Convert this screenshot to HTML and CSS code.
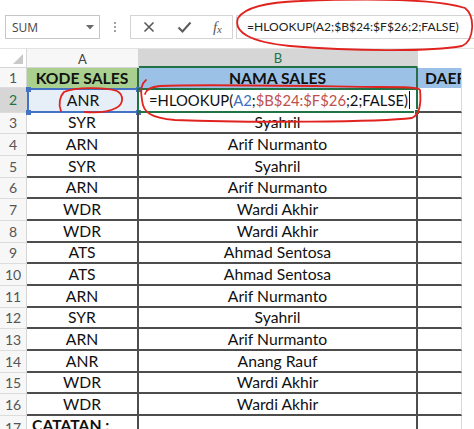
FILE: index.html
```html
<!DOCTYPE html>
<html>
<head>
<meta charset="utf-8">
<link rel="stylesheet" href="styles.css">
</head>
<body>
<div class="app">
  <div class="toolbar">
    <div class="namebox"><span class="nb-text">SUM</span><svg class="caret" width="8" height="5" viewBox="0 0 8 5"><path d="M0 0H8L4 4.5Z" fill="#6a6a6a"/></svg></div>
    <div class="grip"><i></i><i></i><i></i></div>
    <div class="fxbox">
      <svg class="ico" width="14" height="14" viewBox="0 0 14 14"><path d="M2.5 2.5L11.5 11.5M11.5 2.5L2.5 11.5" stroke="#5a5a5a" stroke-width="1.6" fill="none"/></svg>
      <svg class="ico" width="15" height="14" viewBox="0 0 15 14"><path d="M1.5 7.5L5.5 11.5L13.5 2.5" stroke="#5a5a5a" stroke-width="2" fill="none"/></svg>
      <span class="fx"><i>f</i><sub>x</sub></span>
    </div>
    <div class="formula">=HLOOKUP(A2;$B$24:$F$26;2;FALSE)</div>
  </div>

  <div class="sheet">
    <div class="corner"><svg width="10" height="10" viewBox="0 0 10 10"><path d="M10 0V10H0Z" fill="#c9c9c9"/></svg></div>
    <div class="ch">A</div>
    <div class="ch ch-sel">B</div>
    <div class="ch ch-c"></div>
    <div class="ch ch-rest"></div>

    <div class="rh">1</div>
    <div class="c ca hdr green">KODE SALES</div>
    <div class="c cb hdr blue b1">NAMA SALES</div>
    <div class="c cc hdr blue left">DAER</div>
    <div class="rest"></div>

    <div class="rh rh-sel">2</div>
    <div class="c ca a2">ANR<i class="h tl"></i><i class="h tr"></i><i class="h bl"></i><i class="h br"></i></div>
    <div class="c cb b2"><span>=HLOOKUP(<span class="ref1">A2</span>;<span class="ref2">$B$24:$F$26</span>;2;FALSE)</span><i class="caret-line"></i><i class="fill"></i></div>
    <div class="c cc"></div>
    <div class="rest"></div>

    <div class="rh">3</div><div class="c ca">SYR</div><div class="c cb">Syahril</div><div class="c cc"></div><div class="rest"></div>
    <div class="rh">4</div><div class="c ca">ARN</div><div class="c cb">Arif Nurmanto</div><div class="c cc"></div><div class="rest"></div>
    <div class="rh">5</div><div class="c ca">SYR</div><div class="c cb">Syahril</div><div class="c cc"></div><div class="rest"></div>
    <div class="rh">6</div><div class="c ca">ARN</div><div class="c cb">Arif Nurmanto</div><div class="c cc"></div><div class="rest"></div>
    <div class="rh">7</div><div class="c ca">WDR</div><div class="c cb">Wardi Akhir</div><div class="c cc"></div><div class="rest"></div>
    <div class="rh">8</div><div class="c ca">WDR</div><div class="c cb">Wardi Akhir</div><div class="c cc"></div><div class="rest"></div>
    <div class="rh">9</div><div class="c ca">ATS</div><div class="c cb">Ahmad Sentosa</div><div class="c cc"></div><div class="rest"></div>
    <div class="rh">10</div><div class="c ca">ATS</div><div class="c cb">Ahmad Sentosa</div><div class="c cc"></div><div class="rest"></div>
    <div class="rh">11</div><div class="c ca">ARN</div><div class="c cb">Arif Nurmanto</div><div class="c cc"></div><div class="rest"></div>
    <div class="rh">12</div><div class="c ca">SYR</div><div class="c cb">Syahril</div><div class="c cc"></div><div class="rest"></div>
    <div class="rh">13</div><div class="c ca">ARN</div><div class="c cb">Arif Nurmanto</div><div class="c cc"></div><div class="rest"></div>
    <div class="rh">14</div><div class="c ca">ANR</div><div class="c cb">Anang Rauf</div><div class="c cc"></div><div class="rest"></div>
    <div class="rh">15</div><div class="c ca">WDR</div><div class="c cb">Wardi Akhir</div><div class="c cc"></div><div class="rest"></div>
    <div class="rh">16</div><div class="c ca">WDR</div><div class="c cb">Wardi Akhir</div><div class="c cc"></div><div class="rest"></div>

    <div class="rh rh-last">17</div>
    <div class="c ca last note">CATATAN :</div>
    <div class="c cb last"></div>
    <div class="c cc last"></div>
    <div class="rest"></div>
  </div>

  <svg class="ink" width="474" height="429" viewBox="0 0 474 429">
    <path d="M300 1C270 2 246 6 238 18C233 32 250 42 290 46C350 51 430 52 462 46C475 40 475 16 465 8C440 0 380 -2 300 1" />
    <path d="M61 111C58 104 60 96 64 92C75 87 105 87 117 91C124 95 124 104 116 108C108 112 95 113 85 112" />
    <path d="M146 80C141 84 140 90 142 100C143 112 150 118 175 120C250 123 380 122 412 118C421 114 421 100 420 90C419 87 405 87 380 87C300 86 200 84 160 86C150 87 146 90 145 94" />
  </svg>
</div>
</body>
</html>
```

FILE: styles.css
```css
* { box-sizing: border-box; }
html, body { margin: 0; padding: 0; background: #ffffff; }
body { font-family: Lato, "Noto Sans", sans-serif; color: #111; }
.app { position: relative; width: 474px; height: 429px; overflow: hidden; background: #fff; }

.toolbar { height: 48px; display: flex; align-items: flex-start; padding-top: 15px; }
.namebox { margin-left: 5px; width: 95px; height: 24px; border: 1px solid #c6c6c6; display: flex; align-items: center; justify-content: space-between; padding: 0 5px 0 6px; }
.nb-text { font-family: "Open Sans", sans-serif; font-size: 12px; color: #444; }
.caret { margin-top: 1px; }
.grip { width: 30px; height: 24px; display: flex; flex-direction: column; align-items: center; justify-content: center; gap: 2px; }
.grip i { width: 2px; height: 2px; background: #a0a0a0; display: block; }
.fxbox { width: 103px; height: 24px; border: 1px solid #d4d4d4; display: flex; align-items: center; justify-content: space-between; padding: 0 10px 0 11px; }
.fx { font-family: "Liberation Serif", serif; font-size: 15px; color: #5a5a5a; line-height: 1; }
.fx i { font-style: italic; }
.fx sub { font-size: 11px; font-style: italic; vertical-align: -1px; }
.formula { margin-left: 3px; flex: 1; height: 24px; border: 1px solid #d4d4d4; border-right: none; font-size: 12.1px; line-height: 22px; padding-left: 10px; color: #222; white-space: nowrap; }

.sheet { display: grid; grid-template-columns: 27px 112px 279px 44px 12px; grid-template-rows: 20px 20px 24.67px repeat(14, 21.67px) 22px; }
.corner { background: #fff; border-right: 1px solid #d6d6d6; border-bottom: 1px solid #d6d6d6; border-top: 1px solid #e3e3e3; display: flex; align-items: flex-end; justify-content: flex-end; padding: 0 3px 3px 0; }
.ch { border-top: 1px solid #e3e3e3; border-bottom: 1px solid #d6d6d6; border-right: 1px solid #d6d6d6; background: #f7f7f7; font-size: 13px; color: #444; display: flex; align-items: center; justify-content: center; padding-top: 1px; }
.ch-sel { background: #d6d6d6; color: #217346; border-bottom: 2px solid #217346; }
.ch-c, .ch-rest { background: #fff; border-right: none; border-bottom: none; }

.rh { background: #f7f7f7; border-bottom: 1px solid #dcdcdc; border-right: 1px solid #d6d6d6; font-size: 14px; color: #555; display: flex; align-items: center; justify-content: center; }
.rh-sel { background: #d6d6d6; color: #217346; }
.rh-last { border-bottom: none; align-items: flex-start; padding-top: 3px; }

.c { font-size: 15.7px; color: #111; display: flex; align-items: center; justify-content: center; white-space: nowrap; overflow: hidden; border-bottom: 2px solid #4d4d4d; position: relative; }
.ca, .cb { border-right: 2px solid #4d4d4d; }
.cc { border-right: 1px solid #dadada; justify-content: flex-start; }
.rest { background: #fff; }
.hdr { font-weight: 700; border-bottom: none; }
.green { background: #a9d08e; }
.blue { background: #9bc2e6; }
.left { padding-left: 7px; }
.b1 { border-left: 2px solid #2f6b48; border-right-color: #2f6b48; margin-left: -2px; }
.last { border-bottom: none; }
.note { font-weight: 700; justify-content: flex-start; align-items: flex-start; padding-left: 5px; padding-top: 0; }

.a2 { background: #e6eef8; border: 2px solid #4472c4; overflow: visible; }
.h { position: absolute; width: 5px; height: 5px; background: #4472c4; display: block; }
.tl { left: -3px; top: -3px; }
.tr { right: -4px; top: -3px; }
.bl { left: -3px; bottom: -4px; }
.br { right: -4px; bottom: -4px; }
.b2 { border: 2px solid #217346; margin-left: -2px; overflow: visible; justify-content: flex-start; padding-left: 10px; font-size: 14.8px; }
.ref1 { color: #3d70c6; }
.ref2 { color: #c0504d; }
.caret-line { display: block; width: 1px; height: 18px; background: #111; margin-left: 1px; }
.fill { position: absolute; right: -4px; bottom: -4px; width: 6px; height: 6px; background: #217346; border: 1px solid #fff; display: block; }

.ink { position: absolute; left: 0; top: 0; pointer-events: none; }
.ink path { fill: none; stroke: #e1231f; stroke-width: 1.8; stroke-linecap: round; }
```
